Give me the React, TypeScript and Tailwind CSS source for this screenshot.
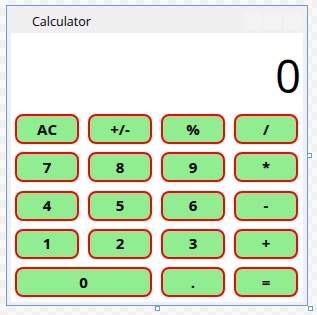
import React from "react";

const rows: { label: string; wide?: boolean }[][] = [
  [{ label: "AC" }, { label: "+/-" }, { label: "%" }, { label: "/" }],
  [{ label: "7" }, { label: "8" }, { label: "9" }, { label: "*" }],
  [{ label: "4" }, { label: "5" }, { label: "6" }, { label: "-" }],
  [{ label: "1" }, { label: "2" }, { label: "3" }, { label: "+" }],
  [{ label: "0", wide: true }, { label: "." }, { label: "=" }],
];

export default function App() {
  return (
    <div
      className="relative w-[317px] h-[315px] overflow-hidden bg-[conic-gradient(#f1f1f1_25%,#f9f9f9_0_50%,#f1f1f1_0_75%,#f9f9f9_0)] bg-[length:16px_16px] pt-[5px] pl-[6px]"
      style={{ fontFamily: '"Open Sans", "Noto Sans", sans-serif' }}
    >
      <div className="relative w-[302px] h-[301px] border border-[#6e9be8] bg-[#f0f0f0] flex flex-col">
        <div className="h-[27px] flex items-start pl-[25px] pr-[6px] shrink-0">
          <span className="text-[12.5px] text-black leading-none mt-[10px]">Calculator</span>
          <div className="ml-auto flex gap-[3px] mt-[6px]">
            <div className="w-[17px] h-[18px] bg-[#f3f3f3]" />
            <div className="w-[17px] h-[18px] bg-[#f3f3f3]" />
            <div className="w-[17px] h-[18px] bg-[#f3f3f3]" />
          </div>
        </div>
        <div className="flex-1 mx-[4px] mb-[3px] bg-white flex flex-col pl-[4px] pr-[5px] pb-[4px]">
          <div className="h-[81px] flex items-start justify-end pt-[20px]">
            <span className="text-[45px] leading-[46px] font-normal text-black mr-[-3px]">0</span>
          </div>
          <div className="grid grid-cols-4 gap-x-[9px] gap-y-[8.25px]">
            {rows.flat().map((b, i) => (
              <button
                key={i}
                className={`${b.wide ? "col-span-2" : ""} h-[30px] rounded-[8px] border-2 border-[#ff0000] bg-[#90ee90] text-black font-bold text-[15px] leading-none flex items-center justify-center`}
              >
                {b.label}
              </button>
            ))}
          </div>
        </div>
        <div className="absolute right-[-5px] top-[147px] w-[5px] h-[5px] border border-[#6e9be8] bg-white" />
        <div className="absolute left-[148px] bottom-[-6px] w-[5px] h-[5px] border border-[#6e9be8] bg-white" />
        <div className="absolute right-[-6px] bottom-[-6px] w-[5px] h-[5px] border border-[#6e9be8] bg-white" />
      </div>
    </div>
  );
}
